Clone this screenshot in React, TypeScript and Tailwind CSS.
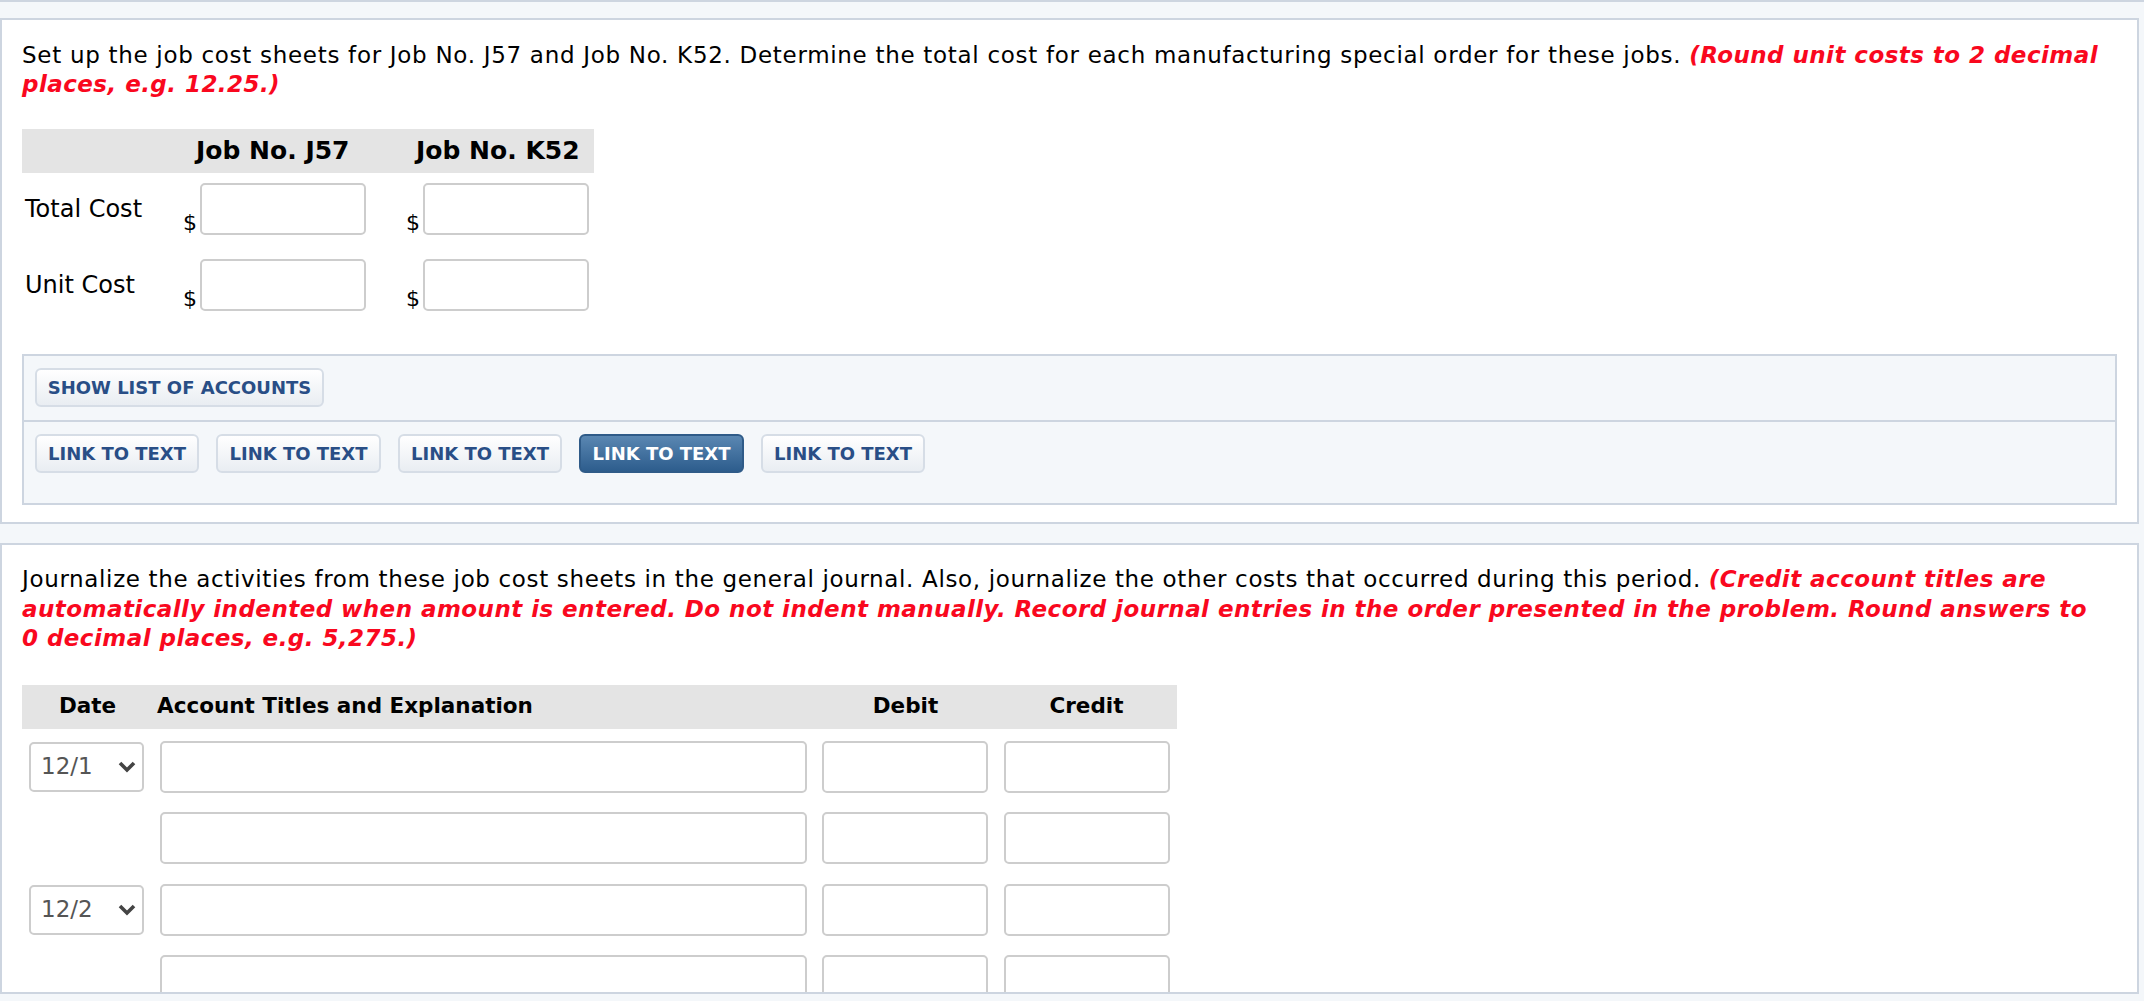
import React from 'react';

const font = "font-['DejaVu_Sans',Verdana,sans-serif]";

function Field({ className = '' }: { className?: string }) {
  return (
    <input
      type="text"
      className={`h-[52px] rounded-[5px] border-2 border-[#cdcdcd] bg-white px-2 text-[22px] outline-none ${className}`}
    />
  );
}

function DateSelect({ value }: { value: string }) {
  return (
    <div className="relative h-[50px] w-[115px]">
      <select
        defaultValue={value}
        className={`h-full w-full appearance-none rounded-[5px] border-2 border-[#cdcdcd] bg-white pl-[10px] text-[23px] text-[#555] outline-none ${font}`}
      >
        <option value="">&nbsp;</option>
        <option value="12/1">12/1</option>
        <option value="12/2">12/2</option>
      </select>
      {/* chevron */}
      <svg
        className="pointer-events-none absolute right-[8px] top-[19px]"
        width="18"
        height="12"
        viewBox="0 0 18 12"
      >
        <path d="M2 2 L9 9 L16 2" fill="none" stroke="#444" strokeWidth="3.6" />
      </svg>
    </div>
  );
}

function Btn({ label, active = false, width }: { label: string; active?: boolean; width: string }) {
  return (
    <button
      className={`flex h-[39px] items-center justify-center rounded-[6px] border-2 text-[18px] font-bold ${width} ${
        active
          ? 'border-[#2f5b88] bg-gradient-to-b from-[#5a87b2] to-[#2d5d8d] text-white'
          : 'border-[#d6dde6] bg-gradient-to-b from-white to-[#e9edf2] text-[#294e86]'
      }`}
    >
      {label}
    </button>
  );
}

const red = 'font-bold italic tracking-[0.45px] text-[#f9081e]';

export default function App() {
  return (
    <div className={`min-h-screen border-t-2 border-[#cdd5e0] bg-[#f4f7fa] pt-[16px] text-black ${font}`}>
      {/* Job cost sheets */}
      <div className="w-[2139px] border-2 border-[#cdd5e0] bg-white px-[20px] pb-[17px] pt-[21px]">
        <p className="whitespace-nowrap text-[23px] leading-[29px] tracking-[0.7px]">
          Set up the job cost sheets for Job No. J57 and Job No. K52. Determine the total cost for each manufacturing
          special order for these jobs. <span className={red}>(Round unit costs to 2 decimal</span>
          <br />
          <span className={red}>places, e.g. 12.25.)</span>
        </p>

        <div className="mt-[30px] w-[572px]">
          <div className="flex h-[44px] items-center bg-[#e4e4e4] text-[25px] font-bold">
            <div className="w-[161px]" />
            <div className="w-[223px] pl-[13px]">Job No. J57</div>
            <div className="pl-[10px]">Job No. K52</div>
          </div>

          {['Total Cost', 'Unit Cost'].map((label, i) => (
            <div key={label} className={`flex h-[52px] ${i === 0 ? 'mt-[10px]' : 'mt-[24px]'}`}>
              <div className="flex w-[161px] items-center pl-[3px] text-[24px]">{label}</div>
              <div className="flex w-[223px] items-end">
                <span className="text-[22px] leading-[24px]">$</span>
                <Field className="ml-[3px] w-[166px]" />
              </div>
              <div className="flex items-end">
                <span className="text-[22px] leading-[24px]">$</span>
                <Field className="ml-[3px] w-[166px]" />
              </div>
            </div>
          ))}
        </div>

        <div className="mt-[43px] border-2 border-[#cdd5e0] bg-[#f4f7fa]">
          <div className="border-b-2 border-[#cdd5e0] px-[11px] pb-[13px] pt-[12px]">
            <Btn label="SHOW LIST OF ACCOUNTS" width="w-[289px]" />
          </div>
          <div className="flex gap-[17px] px-[11px] pb-[30px] pt-[12px]">
            <Btn label="LINK TO TEXT" width="w-[164px]" />
            <Btn label="LINK TO TEXT" width="w-[165px]" />
            <Btn label="LINK TO TEXT" width="w-[164px]" />
            <Btn label="LINK TO TEXT" active width="w-[165px]" />
            <Btn label="LINK TO TEXT" width="w-[164px]" />
          </div>
        </div>
      </div>

      {/* General journal */}
      <div className="mt-[19px] h-[451px] w-[2139px] overflow-hidden border-2 border-[#cdd5e0] bg-white px-[20px] pt-[20px]">
        <p className="whitespace-nowrap text-[23px] leading-[29.5px] tracking-[0.65px]">
          Journalize the activities from these job cost sheets in the general journal. Also, journalize the other costs
          that occurred during this period. <span className={red}>(Credit account titles are</span>
          <br />
          <span className={red}>
            automatically indented when amount is entered. Do not indent manually. Record journal entries in the order
            presented in the problem. Round answers to
          </span>
          <br />
          <span className={red}>0 decimal places, e.g. 5,275.)</span>
        </p>

        <div className="mt-[31px] w-[1155px]">
          <div className="flex h-[44px] items-center bg-[#e4e4e4] text-[21.5px] font-bold">
            <div className="w-[131px] text-center">Date</div>
            <div className="w-[662px] pl-[4px]">Account Titles and Explanation</div>
            <div className="w-[181px] text-center">Debit</div>
            <div className="w-[181px] text-center">Credit</div>
          </div>

          <div className="mt-[12px] flex flex-col gap-y-[19.5px]">
            {['12/1', '', '12/2', ''].map((d, i) => (
              <div key={i} className="flex h-[52px] items-center">
                <div className="w-[131px] pl-[7px]">{d && <DateSelect value={d} />}</div>
                <div className="w-[662px] pl-[7px]">
                  <Field className="w-[647px]" />
                </div>
                <div className="w-[181px] pl-[7px]">
                  <Field className="w-[166px]" />
                </div>
                <div className="w-[181px] pl-[8px]">
                  <Field className="w-[166px]" />
                </div>
              </div>
            ))}
          </div>
        </div>
      </div>
    </div>
  );
}
